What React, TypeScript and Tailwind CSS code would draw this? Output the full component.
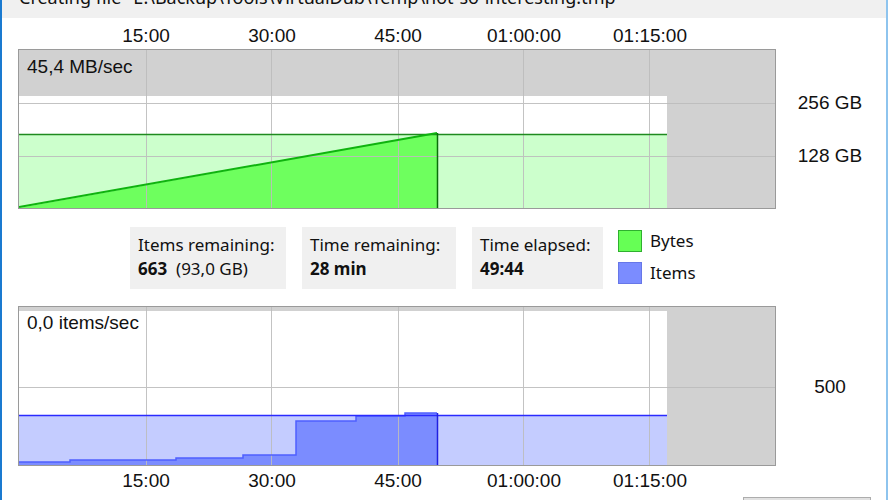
const ui = { fontFamily: '"Noto Sans", "Open Sans", sans-serif' };
const arial = { fontFamily: '"Liberation Sans", Arial, sans-serif' };

const ticks = ["15:00", "30:00", "45:00", "01:00:00", "01:15:00"];
const gridX = [127, 252, 379, 504, 630];

function AxisLabels() {
  return (
    <div className="flex text-[19px] text-[#111]" style={arial}>
      <div className="w-[81px] shrink-0" />
      {ticks.map((t) => (
        <div key={t} className="w-[126px] shrink-0 text-center leading-[22px]">
          {t}
        </div>
      ))}
    </div>
  );
}

function Grid({ h }: { h: number[] }) {
  return (
    <g stroke="#bdbdbd" strokeWidth="1" opacity="0.9">
      {gridX.map((x) => (
        <line key={x} x1={x + 0.5} y1={0} x2={x + 0.5} y2={158} />
      ))}
      {h.map((y) => (
        <line key={y} x1={0} y1={y + 0.5} x2={756} y2={y + 0.5} />
      ))}
    </g>
  );
}

function BytesChart() {
  return (
    <div className="relative w-[758px] h-[160px] border border-[#9a9a9a] bg-[#d1d1d1] shrink-0">
      <svg width="756" height="158" className="block">
        <rect x="0" y="0" width="756" height="158" fill="#d1d1d1" />
        <rect x="0" y="46" width="648" height="112" fill="#ffffff" />
        <rect x="0" y="84" width="648" height="74" fill="#ccffcc" />
        <polygon points="0,158 418,83 418,158" fill="#6eff5e" />
        <Grid h={[53, 106]} />
        <line x1="0" y1="84.5" x2="648" y2="84.5" stroke="#1f8a1f" strokeWidth="1.5" />
        <line x1="0" y1="157" x2="418" y2="83" stroke="#0fb30f" strokeWidth="2" />
        <line x1="418.5" y1="83" x2="418.5" y2="158" stroke="#0a6e0a" strokeWidth="1.5" />
      </svg>
      <div className="absolute left-[8px] top-[6px] text-[19px] leading-[22px] text-[#111]" style={arial}>
        45,4 MB/sec
      </div>
    </div>
  );
}

function ItemsChart() {
  const steps =
    "0,158 0,155 51,155 51,153 157,153 157,151 224,151 224,148 277,148 277,114 337,114 337,109 386,109 386,106 418,106 418,158";
  return (
    <div className="relative w-[758px] h-[160px] border border-[#9a9a9a] bg-[#d1d1d1] shrink-0">
      <svg width="756" height="158" className="block">
        <rect x="0" y="0" width="756" height="158" fill="#d1d1d1" />
        <rect x="0" y="4" width="648" height="154" fill="#ffffff" />
        <rect x="0" y="108" width="648" height="50" fill="#c4ccff" />
        <polygon points={steps} fill="#7b8cff" />
        <Grid h={[80]} />
        <polyline
          points="0,155 51,155 51,153 157,153 157,151 224,151 224,148 277,148 277,114 337,114 337,109 386,109 386,106 418,106"
          fill="none"
          stroke="#4f5fff"
          strokeWidth="1.5"
        />
        <line x1="0" y1="108.5" x2="648" y2="108.5" stroke="#2a2aff" strokeWidth="1.5" />
        <line x1="418.5" y1="106" x2="418.5" y2="158" stroke="#2020e0" strokeWidth="1.5" />
      </svg>
      <div className="absolute left-[8px] top-[5px] text-[19px] leading-[22px] text-[#111] bg-white" style={arial}>
        0,0 items/sec
      </div>
    </div>
  );
}

function Stat({ label, children, w }: { label: string; children: React.ReactNode; w: string }) {
  return (
    <div className={`${w} h-[62px] bg-[#f0f0f0] pl-[8px] pt-[6px] shrink-0`}>
      <div className="text-[17px] leading-[24px] text-[#111]">{label}</div>
      <div className="text-[17px] leading-[24px] text-[#111]">{children}</div>
    </div>
  );
}

export default function App() {
  return (
    <div
      className="w-[888px] h-[500px] overflow-hidden bg-white border-l-2 border-l-[#1a7ad0] border-r-2 border-r-[#8ec4ee] flex flex-col"
      style={ui}
    >
      <div className="h-[18px] bg-[#f0f0f0] shrink-0 overflow-hidden pl-[17px]">
        <div className="text-[18px] leading-[22px] -mt-[14px] text-[#111] whitespace-nowrap">
          Creating file "E:\Backup\Tools\VirtualDub\Temp\not-so-interesting.tmp"
        </div>
      </div>

      <div className="h-[31px] pt-[7px] shrink-0">
        <AxisLabels />
      </div>

      <div className="flex shrink-0">
        <div className="w-[16px] shrink-0" />
        <BytesChart />
        <div className="w-[108px] flex flex-col items-center pt-[43px] gap-[31px] text-[19px] leading-[22px] text-[#111]" style={arial}>
          <div>256 GB</div>
          <div>128 GB</div>
        </div>
      </div>

      <div className="flex mt-[18px] ml-[128px] gap-[16px] shrink-0">
        <Stat label="Items remaining:" w="w-[156px]">
          <span className="font-bold">663</span>
          <span>&nbsp; (93,0 GB)</span>
        </Stat>
        <Stat label="Time remaining:" w="w-[154px]">
          <span className="font-bold">28 min</span>
        </Stat>
        <Stat label="Time elapsed:" w="w-[131px]">
          <span className="font-bold">49:44</span>
        </Stat>
        <div className="flex flex-col gap-[10px] pt-[3px] -ml-[1px]">
          <div className="flex items-center gap-[8px]">
            <div className="w-[24px] h-[22px] bg-[#66ff55] border border-[#2fb02f]" />
            <span className="text-[17px] leading-[22px] text-[#111]">Bytes</span>
          </div>
          <div className="flex items-center gap-[8px]">
            <div className="w-[24px] h-[22px] bg-[#7b8cff] border border-[#6777e8]" />
            <span className="text-[17px] leading-[22px] text-[#111]">Items</span>
          </div>
        </div>
      </div>

      <div className="flex mt-[17px] shrink-0">
        <div className="w-[16px] shrink-0" />
        <ItemsChart />
        <div className="w-[108px] flex flex-col items-center pt-[70px] text-[19px] leading-[22px] text-[#111]" style={arial}>
          <div>500</div>
        </div>
      </div>

      <div className="h-[31px] pt-[4px] shrink-0">
        <AxisLabels />
      </div>

      <div className="ml-[741px] w-[128px] h-[24px] border border-[#adadad] bg-[#e1e1e1] shrink-0" />
    </div>
  );
}
